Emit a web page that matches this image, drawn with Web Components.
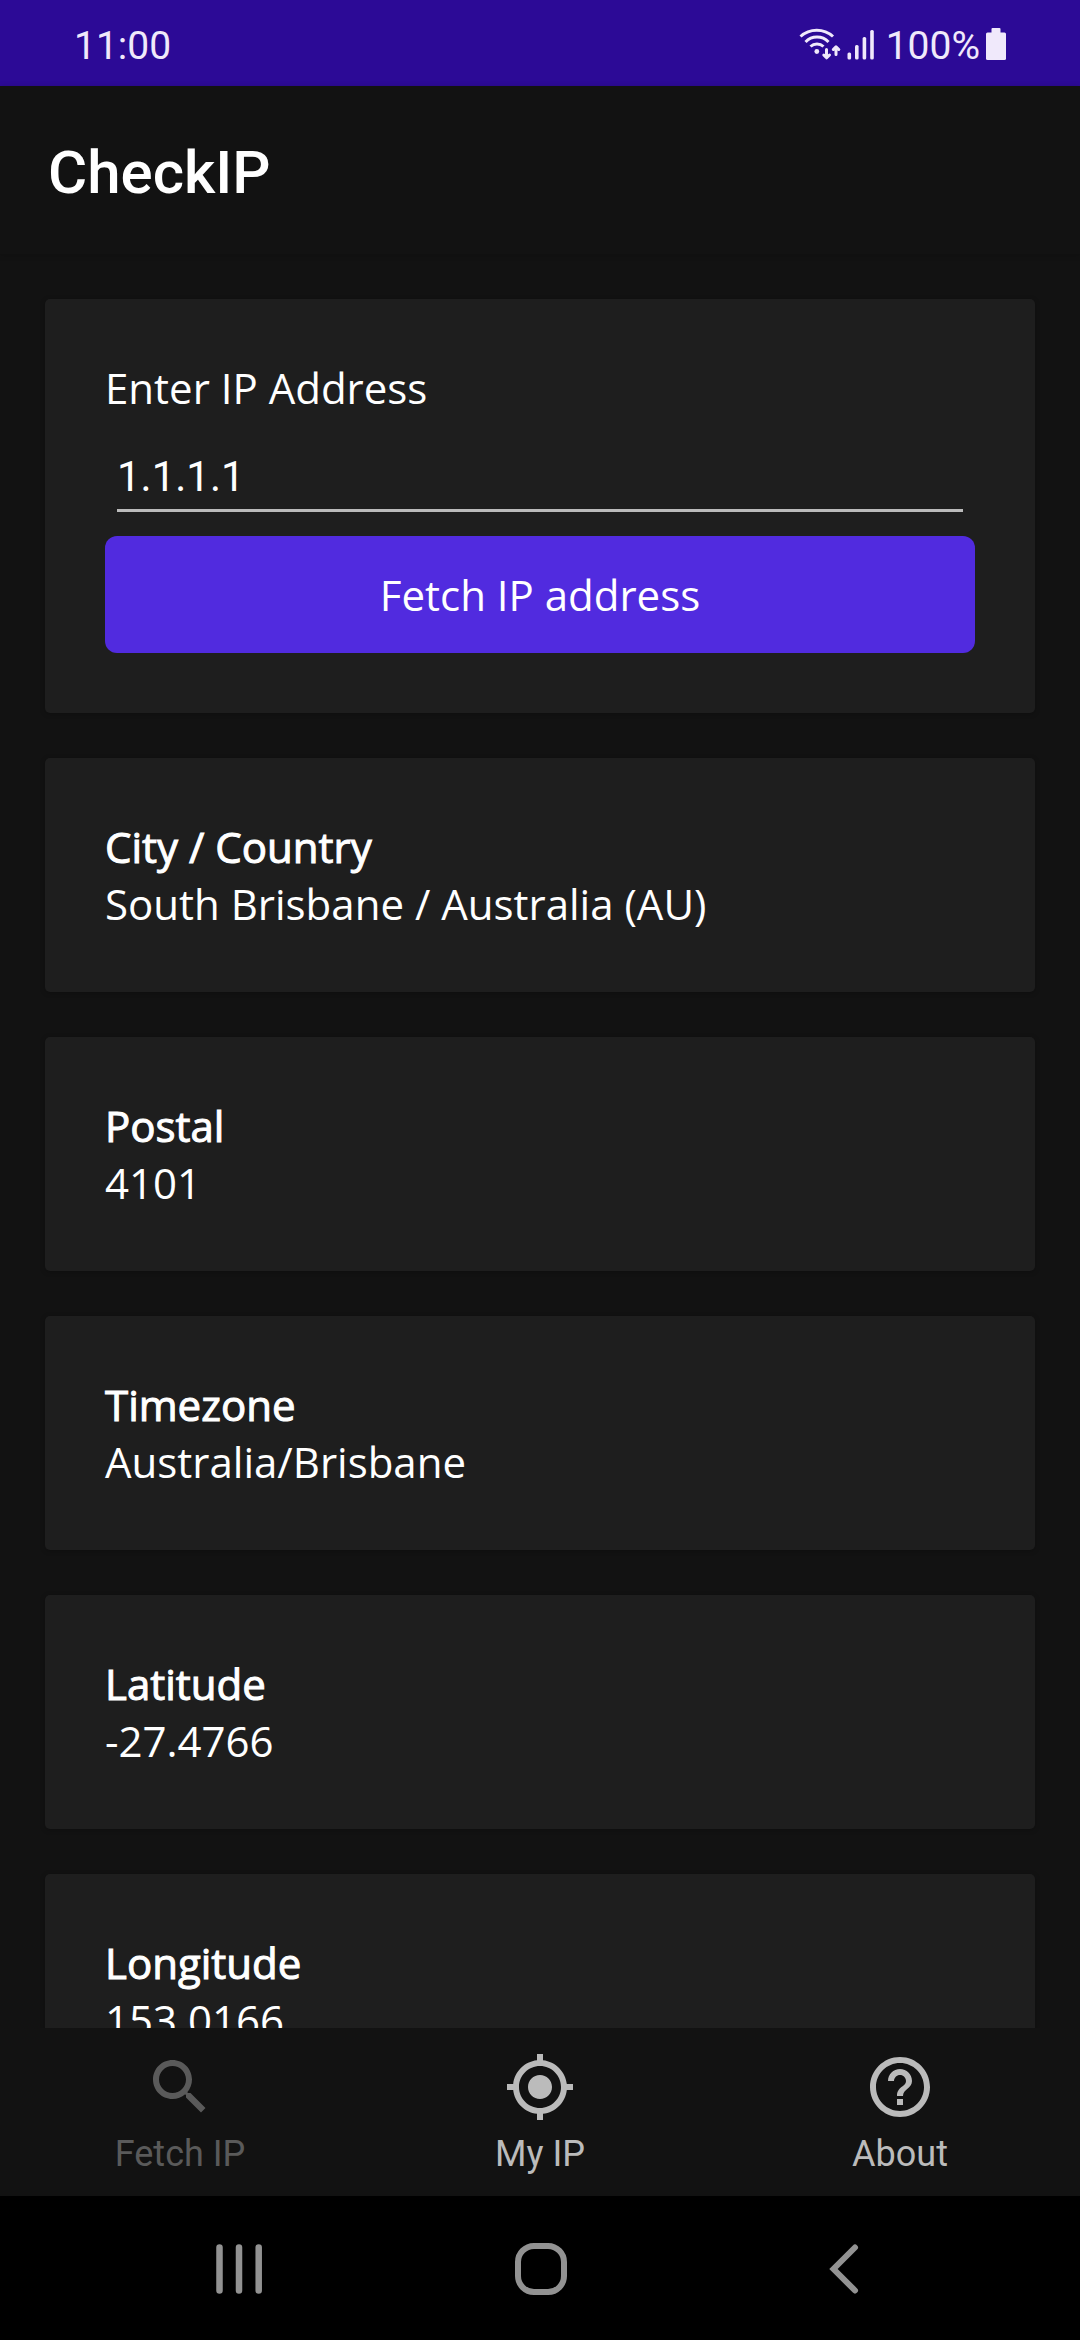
<!DOCTYPE html>
<html lang="en">
<head>
<meta charset="utf-8">
<meta name="viewport" content="width=device-width, initial-scale=1">
<title>CheckIP</title>
<style>
  html, body { margin: 0; height: 100%; background: #121212; }
  body { color: #fff; font-family: Roboto, "Open Sans", sans-serif; }
</style>
</head>
<body>
<check-ip-app>
  <status-bar slot="top" time="11:00" battery="100%"></status-bar>
  <app-header slot="top">CheckIP</app-header>

  <lookup-card value="1.1.1.1"></lookup-card>
  <info-card><span slot="title">City / Country</span>South Brisbane / Australia (AU)</info-card>
  <info-card><span slot="title">Postal</span>4101</info-card>
  <info-card><span slot="title">Timezone</span>Australia/Brisbane</info-card>
  <info-card><span slot="title">Latitude</span>-27.4766</info-card>
  <info-card><span slot="title">Longitude</span>153.0166</info-card>

  <tab-bar slot="bottom">
    <tab-item icon="search" href="#fetch" current>Fetch IP</tab-item>
    <tab-item icon="location" href="#my-ip">My IP</tab-item>
    <tab-item icon="help" href="#about">About</tab-item>
  </tab-bar>
  <system-nav slot="bottom"></system-nav>
</check-ip-app>

<script>
  const define = (name, render, setup) => customElements.define(name, class extends HTMLElement {
    connectedCallback() {
      if (this.shadowRoot) return;
      this.attachShadow({ mode: 'open' }).innerHTML = render(this);
      if (setup) setup(this);
    }
  });

  define('check-ip-app', () => `
    <style>
      :host { display: flex; flex-direction: column; height: 100vh; background: #121212; }
      main { flex: 1; min-height: 0; overflow-y: auto; scrollbar-width: none;
             display: flex; flex-direction: column; gap: 45px; padding: 45px; box-sizing: border-box; }
      ::slotted(*) { flex: none; }
    </style>
    <slot name="top"></slot>
    <main><slot></slot></main>
    <slot name="bottom"></slot>`);

  define('status-bar', el => `
    <style>
      :host { display: flex; justify-content: space-between; align-items: center;
              height: 86px; padding: 6px 74px 0; box-sizing: border-box;
              background: #2c0a96; color: #f0e9fb; font-size: 39px; line-height: 47px; }
      .right { display: flex; align-items: center; gap: 6px; }
      .level { padding-left: 6px; }
      svg { display: block; fill: currentColor; }
      .line { fill: none; stroke: currentColor; stroke-width: 3; stroke-linecap: round; stroke-linejoin: round; }
    </style>
    <span>${el.getAttribute('time')}</span>
    <div class="right">
      <svg width="42" height="40" viewBox="796 26 42 40" aria-label="Wi-Fi">
        <g class="line" style="stroke-linecap:butt">
          <path d="M797.5 36.5A24 24 0 0 1 830 36.5"/>
          <path d="M802.5 42A16 16 0 0 1 825.5 42"/>
          <path d="M807.5 46.5A9.5 9.5 0 0 1 820.5 46.5"/>
        </g>
        <circle cx="813.8" cy="51.5" r="2.4"/>
        <path class="line" d="M823.5 49.5V57.5M820.8 55L823.5 57.8L826.5 55M833 54.5V47M830.3 49.5L833 46.8L835.8 49.5"/>
      </svg>
      <svg width="27" height="40" viewBox="845 26 27 40" aria-label="Signal">
        <rect x="845.5" y="52.5" width="3.6" height="7" rx="1.5"/>
        <rect x="853" y="45" width="3.6" height="14.5" rx="1.5"/>
        <rect x="860.6" y="37" width="3.6" height="22.5" rx="1.5"/>
        <rect x="868.2" y="30" width="3.6" height="29.5" rx="1.5"/>
      </svg>
      <span class="level">${el.getAttribute('battery')}</span>
      <svg width="20" height="40" viewBox="986 26 20 40" aria-label="Battery">
        <rect x="986" y="32.5" width="20" height="27.5" rx="1.5"/>
        <rect x="991.5" y="28" width="9" height="6" rx="1"/>
      </svg>
    </div>`);

  define('app-header', () => `
    <style>
      :host { display: block; padding: 51px 48px 46px; background: #121212;
              box-shadow: 0 1px 6px rgba(0,0,0,.2); }
      h1 { margin: 0; font-size: 60px; line-height: 71px; font-weight: 500; }
    </style>
    <h1><slot></slot></h1>`);

  const card = `
    :host { display: block; padding: 60px; border-radius: 5px; background: #1e1e1e;
            box-shadow: 0 1px 5px rgba(0,0,0,.25);
            font-family: "Open Sans", sans-serif; font-size: 42px; line-height: 57px; }`;

  define('lookup-card', el => `
    <style>${card}
      form { display: flex; flex-direction: column; }
      input { margin: 0 12px; padding: 36px 0 8px; border: 0; border-bottom: 3px solid #bbb;
              background: none; color: inherit; outline: 0; border-radius: 0;
              font-family: Roboto, sans-serif; font-size: 42px; line-height: 49px; height: 49px; }
      button { margin-top: 24px; padding: 30px; border: 0; border-radius: 12px;
               background: #512bdf; color: inherit; font: inherit; }
    </style>
    <form>
      <label for="ip">Enter IP Address</label>
      <input id="ip" type="text" value="${el.getAttribute('value')}">
      <button type="submit">Fetch IP address</button>
    </form>`,
    el => el.shadowRoot.querySelector('form').addEventListener('submit', e => e.preventDefault()));

  /* The title is an emboldened regular face, so it keeps the regular widths. */
  define('info-card', () => `
    <style>${card}
      .title { -webkit-text-stroke: 1px currentColor; }
    </style>
    <div class="title"><slot name="title"></slot></div>
    <div><slot></slot></div>`);

  const icons = {
    search: 'M15.5 14h-.79l-.28-.27C15.41 12.59 16 11.11 16 9.5 16 5.91 13.09 3 9.5 3S3 5.91 3 9.5 5.91 16 9.5 16c1.61 0 3.09-.59 4.23-1.57l.27.28v.79l5 4.99L20.49 19l-4.99-5zm-6 0C7.01 14 5 11.99 5 9.5S7.01 5 9.5 5 14 7.01 14 9.5 11.99 14 9.5 14z',
    location: 'M12 8c-2.21 0-4 1.79-4 4s1.79 4 4 4 4-1.79 4-4-1.79-4-4-4zm8.94 3c-.46-4.17-3.77-7.48-7.94-7.94V1h-2v2.06C6.83 3.52 3.52 6.83 3.06 11H1v2h2.06c.46 4.17 3.77 7.48 7.94 7.94V23h2v-2.06c4.17-.46 7.48-3.77 7.94-7.94H23v-2h-2.06zM12 19c-3.87 0-7-3.13-7-7s3.13-7 7-7 7 3.13 7 7-3.13 7-7 7z',
    help: 'M11 18h2v-2h-2v2zm1-16C6.48 2 2 6.48 2 12s4.48 10 10 10 10-4.48 10-10S17.52 2 12 2zm0 18c-4.41 0-8-3.59-8-8s3.59-8 8-8 8 3.59 8 8-3.59 8-8 8zm0-14c-2.21 0-4 1.79-4 4h2c0-1.1.9-2 2-2s2 .9 2 2c0 2-3 1.75-3 5h2c0-2.25 3-2.5 3-5 0-2.21-1.79-4-4-4z'
  };

  define('tab-bar', () => `
    <style>
      :host { display: block; background: #121212; }
      nav { display: flex; }
      ::slotted(*) { flex: 1; }
    </style>
    <nav><slot></slot></nav>`);

  define('tab-item', el => `
    <style>
      :host { display: block; color: #bbb; }
      :host([current]) { color: #5a5a5a; }
      a { display: flex; flex-direction: column; align-items: center; gap: 10px; padding: 23px 0 21px;
          color: inherit; text-decoration: none; font-size: 36px; line-height: 42px; }
      svg { display: block; fill: currentColor; }
    </style>
    <a href="${el.getAttribute('href')}">
      <svg width="72" height="72" viewBox="0 0 24 24" aria-hidden="true"><path d="${icons[el.getAttribute('icon')]}"/></svg>
      <span><slot></slot></span>
    </a>`);

  define('system-nav', () => `
    <style>
      :host { display: flex; height: 144px; padding: 0 8%; background: #000; color: #929292; }
      button { flex: 1; display: flex; align-items: center; justify-content: center;
               padding: 2px 0 0; border: 0; background: none; color: inherit; }
      svg { fill: none; stroke: currentColor; stroke-width: 6; stroke-linecap: round; }
    </style>
    <button aria-label="Recents"><svg width="60" height="60" viewBox="0 0 60 60"><path stroke-width="6.5" d="M11.5 8.5V51.5M31 8.5V51.5M50.7 8.5V51.5"/></svg></button>
    <button aria-label="Home"><svg width="60" height="60" viewBox="0 0 60 60"><rect x="8" y="7" width="46" height="46" rx="16"/></svg></button>
    <button aria-label="Back"><svg width="60" height="60" viewBox="0 0 60 60"><path stroke-linejoin="miter" d="M43 8.5L21.500 30L43 51.5"/></svg></button>`);
</script>
</body>
</html>
